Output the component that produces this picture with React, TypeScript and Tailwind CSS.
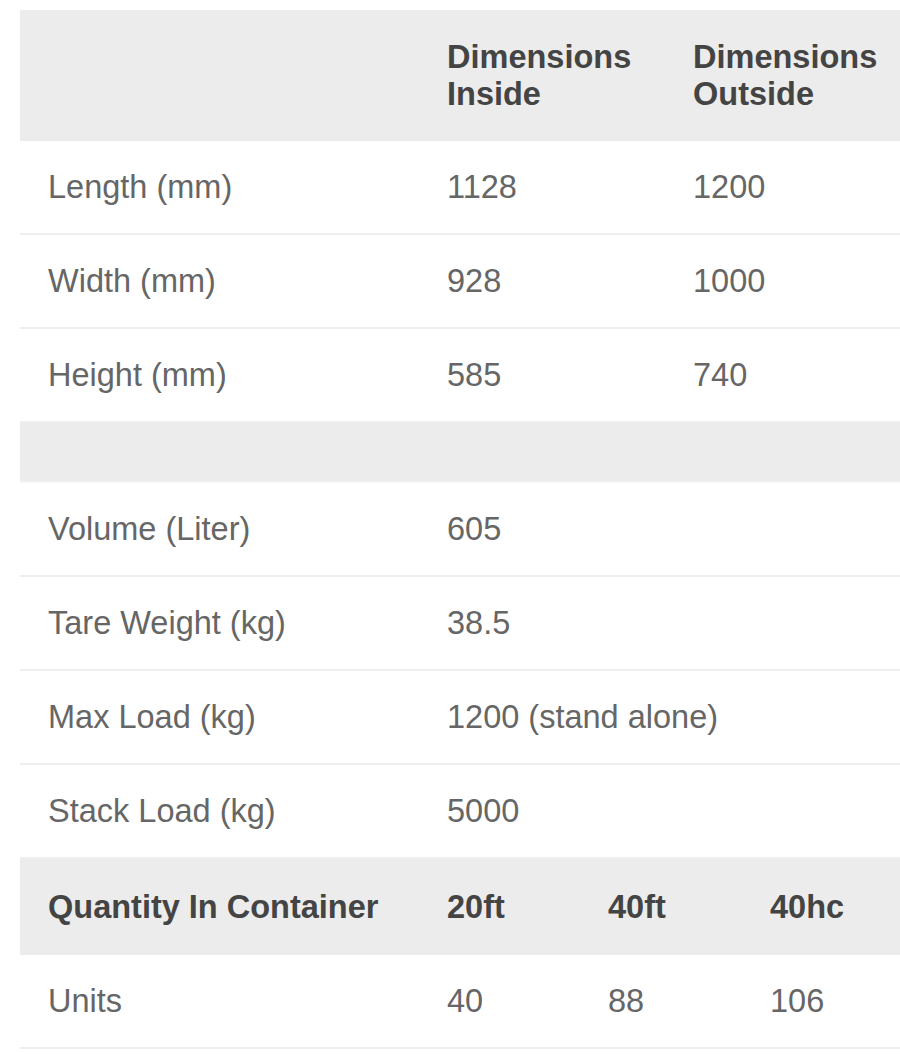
import React from "react";

const font = { fontFamily: '"Liberation Sans", Arial, sans-serif' };

function Row({ cells, cols }: { cells: string[]; cols: string }) {
  return (
    <div className={`grid ${cols} h-[94px] items-center border-b-2 border-[#efefef] text-[32.5px] text-[#666]`}>
      {cells.map((c, i) => (
        <div key={i} className="pl-[28px] whitespace-nowrap">
          {c}
        </div>
      ))}
    </div>
  );
}

export default function App() {
  const main = "grid-cols-[399px_246px_1fr]";
  const qty = "grid-cols-[399px_161px_162px_1fr]";
  return (
    <div className="bg-white min-h-[1054px] pt-[10px] pl-[20px] overflow-hidden" style={font}>
      <div className="w-[880px]">
        <div className={`grid ${main} h-[131px] items-center bg-[#ececec] text-[32.5px] font-bold leading-[37px] text-[#444]`}>
          <div />
          <div className="pl-[28px]">
            Dimensions
            <br />
            Inside
          </div>
          <div className="pl-[28px]">
            Dimensions
            <br />
            Outside
          </div>
        </div>
        <Row cols={main} cells={["Length (mm)", "1128", "1200"]} />
        <Row cols={main} cells={["Width (mm)", "928", "1000"]} />
        <Row cols={main} cells={["Height (mm)", "585", "740"]} />
        <div className="h-[60px] bg-[#ececec] border-b-2 border-[#f5f5f5]" />
        <Row cols={main} cells={["Volume (Liter)", "605", ""]} />
        <Row cols={main} cells={["Tare Weight (kg)", "38.5", ""]} />
        <Row cols={main} cells={["Max Load (kg)", "1200 (stand alone)", ""]} />
        <Row cols={main} cells={["Stack Load (kg)", "5000", ""]} />
        <div className={`grid ${qty} h-[96px] items-center bg-[#ececec] text-[32.5px] font-bold text-[#444]`}>
          <div className="pl-[28px] whitespace-nowrap">Quantity In Container</div>
          <div className="pl-[28px]">20ft</div>
          <div className="pl-[28px]">40ft</div>
          <div className="pl-[28px]">40hc</div>
        </div>
        <Row cols={qty} cells={["Units", "40", "88", "106"]} />
      </div>
    </div>
  );
}
